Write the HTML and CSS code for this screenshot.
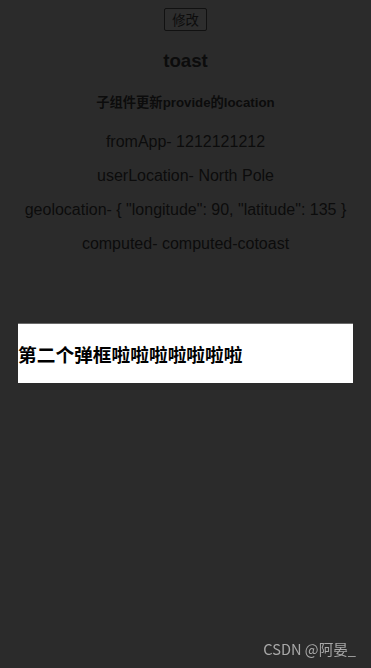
FILE: index.html
```html
<!DOCTYPE html>
<html lang="zh">
<head>
<meta charset="utf-8">
<link rel="stylesheet" href="styles.css">
</head>
<body>
<div class="app">
  <button class="edit-btn">修改</button>
  <h3 class="title">toast</h3>
  <h5 class="subtitle">子组件更新provide的location</h5>
  <p class="line">fromApp- 1212121212</p>
  <p class="line">userLocation- North Pole</p>
  <p class="line">geolocation- { "longitude": 90, "latitude": 135 }</p>
  <p class="line">computed- computed-cotoast</p>
</div>
<div class="dialog">
  <h3 class="dialog-title">第二个弹框啦啦啦啦啦啦啦</h3>
</div>
<div class="watermark">CSDN @阿晏_</div>
</body>
</html>
```
FILE: styles.css
```css
html, body {
  background: #2b2b2b;
}
body {
  margin: 8px;
  font-family: "Liberation Sans", Arial, "Noto Sans CJK SC", sans-serif;
  color: #0c0c0c;
}
.app {
  text-align: center;
}
.edit-btn {
  font-family: "Liberation Sans", "Noto Sans CJK SC", sans-serif;
  font-size: 13.33px;
  color: #0c0c0c;
  background: #2d2d2d;
  border: 1px solid #111;
  border-radius: 2px;
  padding: 1px 7px;
  height: 23px;
  margin: 0;
  vertical-align: top;
  display: inline-block;
}
.title {
  font-size: 18.72px;
  font-weight: bold;
  line-height: 22px;
  margin: 19px 0 18px;
}
.subtitle {
  font-size: 13.28px;
  font-weight: bold;
  line-height: 15px;
  margin: 23px 0;
}
.line {
  font-size: 16px;
  line-height: 18px;
  margin: 16px 0;
}
.dialog {
  position: fixed;
  top: 323px;
  left: 18px;
  width: 335px;
  height: 60px;
  background: #fff;
  border-top: 1px solid #6a6a6a;
  box-sizing: border-box;
}
.dialog-title {
  margin: 18px 0 0;
  font-size: 18.72px;
  font-weight: bold;
  color: #000;
  font-family: "Noto Sans CJK SC", sans-serif;
  line-height: 23px;
}
.watermark {
  position: fixed;
  right: 15px;
  bottom: 9px;
  font-family: "Noto Sans CJK SC", sans-serif;
  font-size: 14.6px;
  color: #a8a8a8;
}
```
